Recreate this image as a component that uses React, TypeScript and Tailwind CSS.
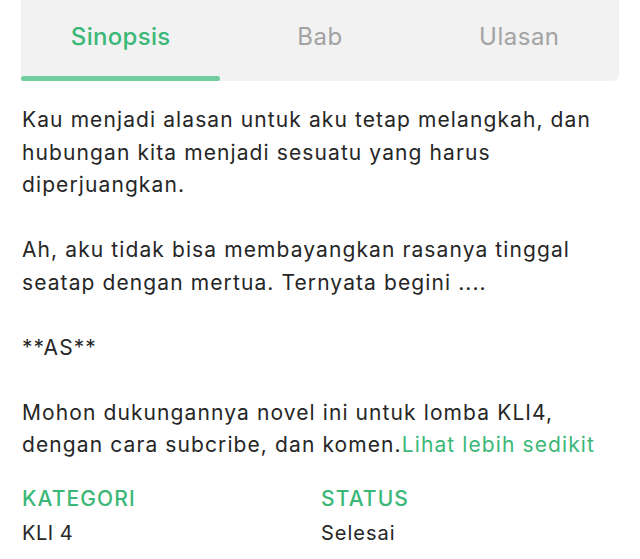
const tabs = ['Sinopsis', 'Bab', 'Ulasan']

const App = () => {
  return (
    <div className="w-[640px] h-[559px] bg-white overflow-hidden font-['Inter','Noto_Sans',sans-serif] text-[#262626]">
      <div className="mx-[21px] bg-[#f2f2f2] rounded-br-md">
        <div className="flex h-[76px]">
          {tabs.map((t, i) => (
            <div
              key={t}
              className={
                i === 0
                  ? 'flex-1 flex items-center justify-center pb-[2px] text-[24px] font-medium tracking-[0.3px] text-[#3bb877]'
                  : 'flex-1 flex items-center justify-center pb-[2px] text-[24px] tracking-[0.5px] text-[#a3a3a3]'
              }
            >
              {t}
            </div>
          ))}
        </div>
        <div className="flex">
          <div className="w-[199px] h-[5px] rounded-full bg-[#71cd9d]" />
        </div>
      </div>

      <div className="pl-[22px] pr-[20px] pt-[23px] text-[21px] leading-[32.5px] tracking-[1.1px]">
        <p className="whitespace-nowrap">
          Kau menjadi alasan untuk aku tetap melangkah, dan
          <br />
          hubungan kita menjadi sesuatu yang harus
          <br />
          diperjuangkan.
        </p>
        <p className="mt-[32.5px] whitespace-nowrap">
          Ah, aku tidak bisa membayangkan rasanya tinggal
          <br />
          seatap dengan mertua. Ternyata begini ....
        </p>
        <p className="mt-[32.5px]">**AS**</p>
        <p className="mt-[32.5px] whitespace-nowrap">
          Mohon dukungannya novel ini untuk lomba KLI4,
          <br />
          dengan cara subcribe, dan komen.
          <span className="text-[#3bb877]">Lihat lebih sedikit</span>
        </p>

        <div className="grid grid-cols-2 mt-[22px] tracking-normal">
          <div>
            <div className="text-[21px] leading-[30px] font-medium text-[#3bb877] tracking-[1.1px]">KATEGORI</div>
            <div className="text-[20px] leading-[38px] tracking-[0.5px]">KLI 4</div>
          </div>
          <div>
            <div className="text-[21px] leading-[30px] font-medium text-[#3bb877] tracking-[1.1px]">STATUS</div>
            <div className="text-[20px] leading-[38px] tracking-[1px]">Selesai</div>
          </div>
        </div>
      </div>
    </div>
  )
}

export default App
